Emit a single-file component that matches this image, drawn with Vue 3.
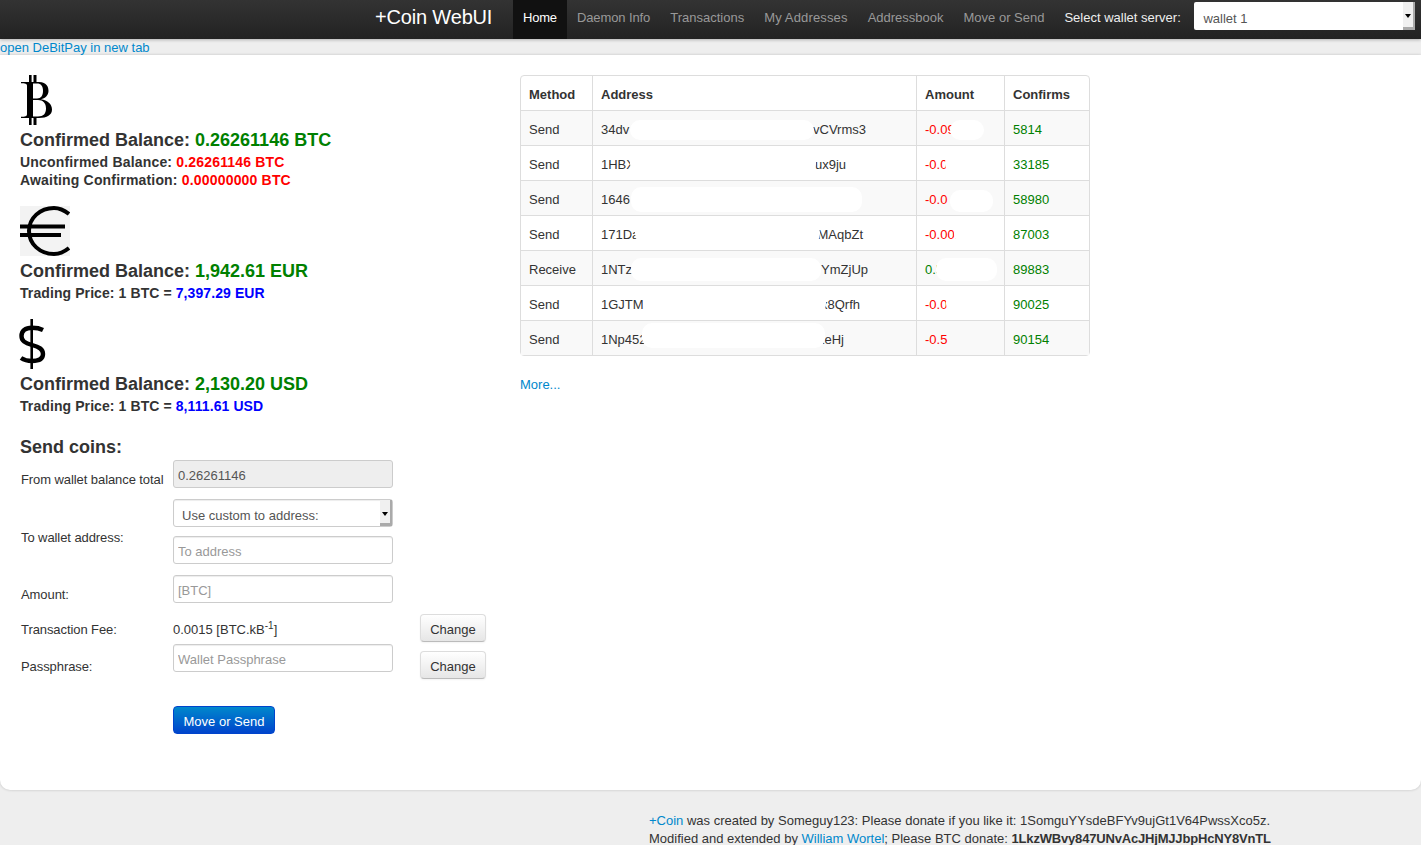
<script setup>
const links = ['Daemon Info', 'Transactions', 'My Addresses', 'Addressbook', 'Move or Send']

// right = offset of the address tail from the cell edge, the screenshot has the middle painted out
const rows = [
  { method: 'Send', start: '34dv', tail: 'xvCVrms3', right: 50, amount: '-0.09', type: 'red', confirms: '5814' },
  { method: 'Send', start: '1HBX', tail: 'Jux9ju', right: 70, amount: '-0.01', type: 'red', confirms: '33185' },
  { method: 'Send', start: '1646', tail: '', right: 0, amount: '-0.0', type: 'red', confirms: '58980' },
  { method: 'Send', start: '171Da', tail: 'MAqbZt', right: 53, amount: '-0.001', type: 'red', confirms: '87003' },
  { method: 'Receive', start: '1NTz', tail: 'YmZjUp', right: 48, amount: '0.5', type: 'green', confirms: '89883' },
  { method: 'Send', start: '1GJTM', tail: 'x8Qrfh', right: 56, amount: '-0.01', type: 'red', confirms: '90025' },
  { method: 'Send', start: '1Np452', tail: 'xeHj', right: 72, amount: '-0.5', type: 'red', confirms: '90154' }
]

// painted-over patches, in px relative to the table box
const patches = [
  [110, 45, 184, 20], [110, 77, 186, 22], [111, 112, 231, 25], [115, 147, 185, 22],
  [111, 183, 190, 23], [123, 217, 183, 22], [122, 248, 183, 25],
  [430, 45, 34, 20], [425, 77, 44, 22], [430, 115, 43, 22], [434, 147, 46, 22],
  [416, 183, 61, 23], [426, 217, 43, 22]
]
</script>

<template>
  <div class="page">
    <header class="navbar">
      <a class="brand">+Coin WebUI</a>
      <nav class="nav">
        <a class="nav-item active">Home</a>
        <a v-for="l in links" :key="l" class="nav-item">{{ l }}</a>
      </nav>
      <span class="wallet-label">Select wallet server:</span>
      <div class="select-wrap wallet-select">
        <select class="select"><option>wallet 1</option></select>
        <span class="select-btn"></span>
      </div>
    </header>

    <div class="tab-link"><a>open DeBitPay in new tab</a></div>

    <main class="content">
      <section class="left">
        <svg class="cur" width="50" height="50" viewBox="0 0 50 50">
          <path fill-rule="evenodd" d="M1 7H19C27 7 28.500 12.500 28.500 16C28.500 20.500 25 23.300 21 24.200C27.500 25 32 29 32 34.500C32 40 27 43 19 43H1V41.800C5 41.800 7 41.500 7 39V11C7 8.500 5 8.300 1 8.300ZM13 8.500V23.500H17C21 23.500 23 20.500 23 16C23 11 21 8.500 17 8.500ZM13 25V41.500H18C23.500 41.500 26 38.500 26 33.500C26 28 23 25 18 25Z" />
          <path d="M9 0h2.600v7H9zM13.500 0h3v7h-3zM9 43h2.600v7H9zM13.500 43h3v7h-3z" />
        </svg>
        <h4 class="big">Confirmed Balance: <span class="green">0.26261146 BTC</span></h4>
        <p class="small">Unconfirmed Balance: <span class="red">0.26261146 BTC</span></p>
        <p class="small">Awaiting Confirmation: <span class="red">0.00000000 BTC</span></p>

        <svg class="cur euro" width="50" height="50" viewBox="0 0 50 50">
          <path d="M49 8C44 4 39 2 34 2 20 2 9 12 9 25s11 23 25 23c5 0 10-2 15-6" stroke="#000" stroke-width="4" fill="none" />
          <path d="M0 20.500h45M0 29h41" stroke="#000" stroke-width="4.200" fill="none" />
        </svg>
        <h4 class="big">Confirmed Balance: <span class="green">1,942.61 EUR</span></h4>
        <p class="small trade">Trading Price: 1 BTC = <span class="blue">7,397.29 EUR</span></p>

        <svg class="cur dollar" width="50" height="50" viewBox="0 0 50 50">
          <path d="M12.700 0v50" stroke="#000" stroke-width="2.600" fill="none" />
          <path d="M24 11C20 9 17 8.800 13 8.800 6 8.800 2.500 12 2.500 17 2.500 22 6 24 13 26 20 28 24 30 24 35 24 40 20 42 13 42 9 42 5 41 2 39" stroke="#000" stroke-width="4.400" fill="none" />
        </svg>
        <h4 class="big">Confirmed Balance: <span class="green">2,130.20 USD</span></h4>
        <p class="small trade">Trading Price: 1 BTC = <span class="blue">8,111.61 USD</span></p>

        <h3 class="send-title">Send coins:</h3>

        <form class="send-form" @submit.prevent>
          <label class="lbl r1">From wallet balance total</label>
          <input class="input r1 c2 readonly" value="0.26261146" readonly />

          <label class="lbl r2 nudge">To wallet address:</label>
          <div class="select-wrap form-select r2a c2">
            <select class="select"><option>Use custom to address:</option></select>
            <span class="select-btn"></span>
          </div>
          <input class="input r2b c2" placeholder="To address" />

          <label class="lbl r3">Amount:</label>
          <input class="input r3 c2" placeholder="[BTC]" />

          <label class="lbl r4 nudge">Transaction Fee:</label>
          <span class="fee r4 c2 nudge">0.0015 [BTC.kB<sup>-1</sup>]</span>
          <button class="btn r4 c3" type="button">Change</button>

          <label class="lbl r5 nudge">Passphrase:</label>
          <input class="input r5 c2" placeholder="Wallet Passphrase" />
          <button class="btn r5 c3 low" type="button">Change</button>

          <button class="btn-primary r6 c2" type="submit">Move or Send</button>
        </form>
      </section>

      <section class="right">
        <div class="table-box">
          <table class="tx">
            <thead>
              <tr><th class="w1">Method</th><th class="w2">Address</th><th class="w3">Amount</th><th class="w4">Confirms</th></tr>
            </thead>
            <tbody>
              <tr v-for="(r, i) in rows" :key="i">
                <td>{{ r.method }}</td>
                <td class="addr">
                  {{ r.start }}
                  <span v-if="r.tail" class="addr-end" :style="{ right: r.right + 'px' }">{{ r.tail }}</span>
                </td>
                <td :class="r.type">{{ r.amount }}</td>
                <td class="green">{{ r.confirms }}</td>
              </tr>
            </tbody>
          </table>
          <i
            v-for="(p, i) in patches"
            :key="i"
            class="patch"
            :style="{ left: p[0] + 'px', top: p[1] + 'px', width: p[2] + 'px', height: p[3] + 'px' }"
          ></i>
        </div>
        <a class="more">More...</a>
      </section>
    </main>

    <footer class="footer">
      <p><a>+Coin</a> was created by Someguy123: Please donate if you like it: 1SomguYYsdeBFYv9ujGt1V64PwssXco5z.</p>
      <p>Modified and extended by <a>William Wortel</a>; Please BTC donate: <b>1LkzWBvy847UNvAcJHjMJJbpHcNY8VnTL</b></p>
    </footer>
  </div>
</template>

<style>
html, body { margin: 0; background: #eee; }
</style>

<style scoped>
.page {
  height: 845px;
  overflow: hidden;
  background: #eee;
  font-family: "Liberation Sans", Arial, sans-serif;
  font-size: 13px;
  line-height: 18px;
  color: #333;
}
a { color: #0088cc; text-decoration: none; }

/* top bar */
.navbar {
  height: 39px;
  box-sizing: border-box;
  display: flex;
  align-items: center;
  padding-left: 375px;
  background: linear-gradient(#333, #222);
  box-shadow: 0 1px 3px rgba(0,0,0,.25);
  position: relative;
}
.brand { color: #fff; font-size: 20px; font-weight: 200; width: 138px; margin-top: -5px; letter-spacing: -.17px; }
.nav { display: flex; height: 100%; }
.nav-item { color: #999; padding: 0 10px; line-height: 36px; }
.nav-item.active { color: #fff; background: #111; letter-spacing: -.2px; }
.nav-item:nth-child(2) { letter-spacing: -.1px; }
.nav-item:nth-child(4) { letter-spacing: .15px; }
.wallet-label { color: #eee; margin: -3px 0 0 10px; width: 130px; }
.select-wrap { position: relative; box-sizing: border-box; }
.wallet-select { width: 221px; height: 28px; margin-top: -7px; background: #fff; border-radius: 2px; }
.select {
  appearance: none;
  width: 100%;
  height: 100%;
  box-sizing: border-box;
  border: 0;
  background: transparent;
  font: 13px "Liberation Sans", Arial, sans-serif;
  color: #555;
  padding: 4px 0 0 9px;
  outline: 0;
}
.select-btn {
  position: absolute;
  top: 0;
  right: 0;
  bottom: 0;
  width: 12px;
  background: #f0f0f0;
  border-right: 2px solid #aaa;
  border-bottom: 3px solid #aaa;
  box-sizing: border-box;
}
.select-btn::after {
  content: '';
  position: absolute;
  left: 2px;
  top: 12px;
  border: 3.500px solid transparent;
  border-top: 4px solid #000;
  border-bottom: 0;
}

.tab-link { height: 16px; line-height: 17px; }

/* main white panel */
.content {
  height: 735px;
  box-sizing: border-box;
  display: flex;
  padding-top: 20px;
  background: #fff;
  border-radius: 0 0 10px 10px;
  box-shadow: 0 0 3px rgba(0,0,0,.2);
}
.left { width: 520px; padding-left: 20px; box-sizing: border-box; flex: none; }
.cur { display: block; }
.euro { background: #f3f3f3; margin-top: 17px; }
.dollar { margin-top: 17px; margin-left: -1px; }
.big { font-size: 18px; line-height: 20px; margin: 5px 0 3px; font-weight: bold; }
.small { font-size: 14px; line-height: 18px; margin: 0; font-weight: bold; letter-spacing: .18px; }
.small.trade { letter-spacing: .09px; }
.green { color: green; }
.red { color: red; }
.blue { color: blue; }
.send-title { font-size: 18px; line-height: 20px; margin: 22px 0 3px; font-weight: bold; }

/* send form */
.send-form {
  display: grid;
  grid-template-columns: 152px 247px auto;
  grid-template-rows: 39px 37px 39px 39px 30px 44px 46px;
  margin: 3px 0 0 1px;
  justify-content: start;
}
.lbl { align-self: center; grid-column: 1; letter-spacing: -.08px; }
.nudge { padding-top: 2px; }
.c2 { grid-column: 2; }
.c3 { grid-column: 3; }
.r1 { grid-row: 1; }
.r2 { grid-row: 2 / span 2; }
.r2a { grid-row: 2; }
.r2b { grid-row: 3; }
.r3 { grid-row: 4; }
.r4 { grid-row: 5; }
.r5 { grid-row: 6; }
.r6 { grid-row: 7; }
.input, .form-select {
  width: 220px;
  height: 28px;
  box-sizing: border-box;
  border: 1px solid #ccc;
  border-radius: 3px;
  background: #fff;
  box-shadow: inset 0 1px 1px rgba(0,0,0,.075);
}
.input {
  font: 13px "Liberation Sans", Arial, sans-serif;
  color: #555;
  padding: 2px 4px 0;
  outline: 0;
}
.input::placeholder { color: #999; opacity: 1; }
.readonly { background: #eee; box-shadow: none; color: #555; }
.form-select .select { padding: 5px 0 0 8px; }
.fee { align-self: center; }
sup { font-size: 10px; line-height: 0; }
.btn {
  height: 28px;
  width: 66px;
  padding: 3px 0 0;
  box-sizing: border-box;
  border: 1px solid #ccc;
  border-color: #ddd #ddd #bbb;
  border-radius: 4px;
  background: linear-gradient(#fff, #e6e6e6);
  box-shadow: inset 0 1px 0 rgba(255,255,255,.2), 0 1px 2px rgba(0,0,0,.05);
  font: 13px "Liberation Sans", Arial, sans-serif;
  color: #333;
}
.low { margin-top: 7px; }
.btn-primary {
  width: 102px;
  height: 28px;
  margin-top: 18px;
  padding: 3px 0 0;
  border: 1px solid #04c;
  border-radius: 4px;
  background: linear-gradient(#08c, #04c);
  font: 13px "Liberation Sans", Arial, sans-serif;
  color: #fff;
}

/* transactions table */
.right { width: 570px; }
.table-box { position: relative; }
.tx {
  width: 570px;
  table-layout: fixed;
  border-collapse: separate;
  border-spacing: 0;
  border: 1px solid #ddd;
  border-radius: 4px;
}
.tx th, .tx td {
  height: 31px;
  padding: 3px 8px 0;
  text-align: left;
  border-left: 1px solid #ddd;
  border-top: 1px solid #ddd;
  overflow: hidden;
  white-space: nowrap;
}
.tx th:first-child, .tx td:first-child { border-left: 0; }
.tx th { border-top: 0; font-weight: bold; }
.tx tbody tr:nth-child(odd) td { background: #f9f9f9; }
.w1 { width: 55px; }
.w2 { width: 307px; }
.w3 { width: 71px; }
.w4 { width: 68px; }
.addr { position: relative; }
.addr-end { position: absolute; top: 10px; }
.more { display: block; margin-top: 20px; }

/* white patches painted over the screenshot */
.patch { position: absolute; background: #fff; border-radius: 10px; }

.footer { padding: 22px 0 0 649px; }
.footer p { margin: 0; white-space: nowrap; }
.footer b { letter-spacing: -.18px; }
</style>
